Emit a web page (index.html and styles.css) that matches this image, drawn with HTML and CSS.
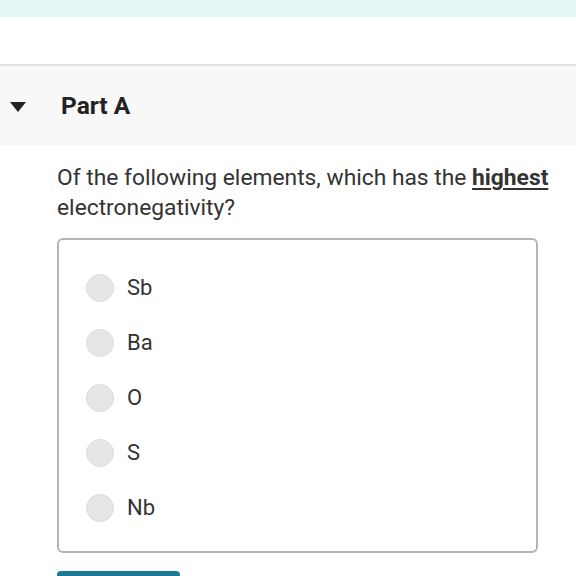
FILE: index.html
```html
<!DOCTYPE html>
<html lang="en">
<head>
  <meta charset="UTF-8">
  <meta name="viewport" content="width=device-width, initial-scale=1.0">
  <title>Part A</title>
  <link rel="stylesheet" href="styles.css">
</head>
<body>
  <div class="topbar"></div>
  <div class="spacer"></div>

  <div class="part-header">
    <span class="caret"></span>
    <h2>Part A</h2>
  </div>

  <div class="content">
    <p class="question">Of the following elements, which has the <strong>highest</strong> electronegativity?</p>

    <div class="choices">
      <label class="choice"><span class="radio"></span>Sb</label>
      <label class="choice"><span class="radio"></span>Ba</label>
      <label class="choice"><span class="radio"></span>O</label>
      <label class="choice"><span class="radio"></span>S</label>
      <label class="choice"><span class="radio"></span>Nb</label>
    </div>

    <button class="submit" aria-label="Submit"></button>
  </div>
</body>
</html>
```

FILE: styles.css
```css
/* ===== Reset ===== */
* {
  margin: 0;
  padding: 0;
  box-sizing: border-box;
}

body {
  font-family: Roboto, "Liberation Sans", sans-serif;
  background: white;
  color: #333;
}

.topbar {
  height: 17px;
  background: #e6f6f6;
}

.spacer {
  height: 47px;
}

.part-header {
  display: flex;
  align-items: center;
  height: 81px;
  padding-left: 10px;
  background: #f8f8f8;
  border-top: 2px solid #e2e2e2;
}

.caret {
  width: 0;
  height: 0;
  border-left: 8px solid transparent;
  border-right: 8px solid transparent;
  border-top: 10px solid #222;
  margin-top: 2px;
}

h2 {
  margin-left: 35px;
  font-size: 24.5px;
  font-weight: bold;
  color: #222;
}

.content {
  padding: 18px 20px 0 57px;
}

.question {
  font-size: 22.8px;
  line-height: 30px;
  color: #333;
}

.question strong {
  text-decoration: underline;
  text-decoration-thickness: 2px;
  text-underline-offset: 3px;
}

.choices {
  margin-top: 15px;
  width: 481px;
  height: 315px;
  padding: 20px 0 16px 27px;
  border: 2px solid #b4b4b4;
  border-radius: 6px;
}

.choice {
  display: flex;
  align-items: center;
  height: 55px;
  font-size: 22px;
  color: #333;
}

.radio {
  width: 28px;
  height: 28px;
  margin-right: 13px;
  border-radius: 50%;
  background: #e6e6e6;
  border: 1px solid #dcdcdc;
}

.submit {
  display: block;
  margin-top: 18px;
  width: 123px;
  height: 40px;
  border: none;
  border-radius: 4px;
  background: #1b7a9a;
}
```
